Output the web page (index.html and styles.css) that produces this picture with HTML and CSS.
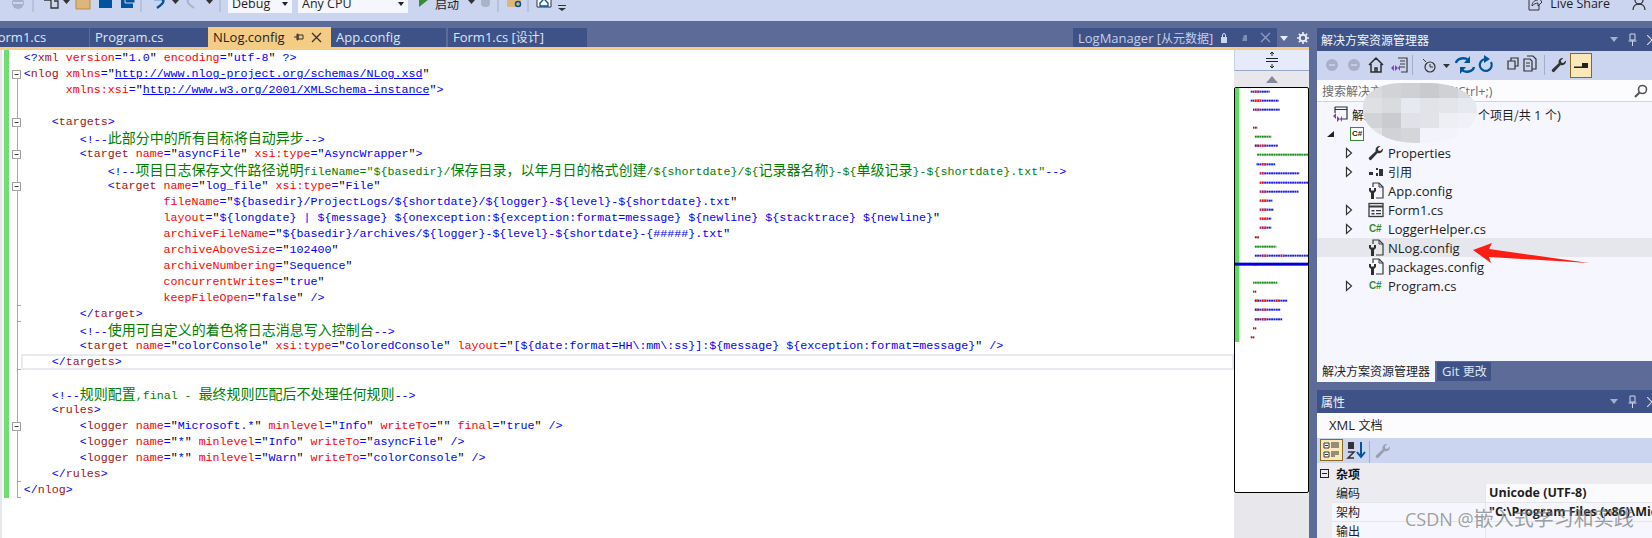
FILE: index.html
```html
<!DOCTYPE html>
<html lang="zh-CN">
<head>
<meta charset="utf-8">
<title>NLog.config</title>
<link rel="stylesheet" href="styles.css">
</head>
<body>
<svg class="defs" width="0" height="0" aria-hidden="true">
  <symbol id="wrench" viewBox="0 0 16 16"><path d="M15 3.500a4.200 4.200 0 0 1-5.400 4.600L3.600 14.600a1.600 1.600 0 0 1-2.300-2.300l6.400-6A4.200 4.200 0 0 1 12.400 1L9.800 3.600l.5 2 2 .5z"/></symbol>
  <symbol id="cfg" viewBox="0 0 16 18"><path d="M5 5V1h6l4 4v11H8" fill="none" stroke="#3a3a3a" stroke-width="1.200"/><path d="M11 1v4h4" fill="none" stroke="#3a3a3a"/><path d="M1 6v3l2 2v6h3v-6l2-2V6L6 6v2.500H3V6z" fill="#2f2f2f"/></symbol>
  <symbol id="form" viewBox="0 0 16 16"><rect x="1" y="1.500" width="14" height="13" fill="none" stroke="#3a3a3a" stroke-width="1.300"/><path d="M1 4.500h14" stroke="#3a3a3a" stroke-width="2"/><path d="M3.500 8h3v1.500h-3zM3.500 11h3v1.500h-3zM8 8h5v1.300H8zM8 11h5v1.300H8z" fill="#3a3a3a"/></symbol>
  <symbol id="exp" viewBox="0 0 8 12"><path d="M1.500 1.500 6.500 6l-5 4.500z" fill="#fff" stroke="#333" stroke-width="1.200"/></symbol>
</svg>

<div class="app">
  <header class="toolbar">
    <div class="tb-row">
      <svg class="tb-a" width="222" height="20" viewBox="0 0 222 20">
        <circle cx="18" cy="7" r="6" fill="#a9afc6"/><path d="M13 7h10" stroke="#ccd5f0" stroke-width="2"/>
        <path d="M33 0v16M141 0v16M220 0v16" stroke="#a4aec8"/>
        <path d="M44 4h7v8h7V5h-4" fill="none" stroke="#333" stroke-width="1.300"/>
        <path d="M63 4h7l-3.500 4z M172 4h7l-3.500 4z M206 4h7l-3.500 4z" fill="#333"/>
        <path d="M76 3h14v10H76z" fill="#dcb67a" stroke="#c08b37"/>
        <path d="M99 3h13v9H99z" fill="#00539c"/>
        <path d="M121 4h12v8h-12z" fill="#00539c"/><path d="M125 2h10v5h-10z" fill="#00539c" stroke="#ccd5f0"/>
        <path d="M154 3h8c3 2 1 5-5 9" fill="none" stroke="#00539c" stroke-width="2.400"/>
        <path d="M196 3h-7c-3 2-1 5 5 9" fill="none" stroke="#aab2c8" stroke-width="2"/>
      </svg>
      <div class="combo combo-debug"><span>Debug</span><i class="tri"></i></div>
      <div class="combo combo-cpu"><span>Any CPU</span><i class="tri"></i></div>
      <svg class="play" width="14" height="20" viewBox="0 0 14 20"><path d="M2 0v11l9-7z" fill="#388a34"/></svg>
      <span class="start z12">启动</span>
      <svg class="tb-b" width="116" height="20" viewBox="0 0 116 20">
        <path d="M2 4h7l-3.500 4z" fill="#333"/>
        <rect x="15" y="2" width="9" height="9" rx="4" fill="#aab2c8"/>
        <path d="M32 0v16M62 0v16" stroke="#a4aec8"/>
        <path d="M41 3h14v8H41z" fill="#dcb67a"/><circle cx="52" cy="8" r="2.500" fill="none" stroke="#00539c" stroke-width="1.500"/>
        <path d="M71 2h14v9H71z" fill="#fff" stroke="#333"/><path d="M74 7l4-4 4 4v3h-8z" fill="none" stroke="#00539c" stroke-width="1.300"/>
        <path d="M92 9.500h8" stroke="#333"/><path d="M92 12h8l-4 3z" fill="#333"/>
      </svg>
      <div class="live">
        <svg width="14" height="16" viewBox="0 0 14 16"><path d="M1 2v12h10V9M4 10c0-4 3-6 6-6V1l4 5-4 4V7C8 7 6 8 4 10z" fill="none" stroke="#333"/></svg>
        <span>Live Share</span>
        <svg class="user" width="14" height="16" viewBox="0 0 14 16"><circle cx="7" cy="4" r="4" fill="none" stroke="#333" stroke-width="1.300"/><path d="M1 14c0-4 3-6 6-6s6 2 6 6" fill="none" stroke="#333" stroke-width="1.300"/></svg>
      </div>
    </div>
  </header>

  <main class="main">
    <section class="doc">
      <nav class="tabbar">
        <div class="tab tab-form"><span class="cut">Form1.cs</span></div>
        <div class="tab tab-prog">Program.cs</div>
        <div class="tab tab-active"><span>NLog.config</span>
          <svg class="pin-s" width="10" height="10" viewBox="0 0 10 10"><path d="M0 5h3M3 2h1v6H3zM4 3h5v4H4z" fill="none" stroke="#333"/></svg>
          <svg class="x-s" width="11" height="11" viewBox="0 0 11 11"><path d="M1 1l9 9M10 1l-9 9" stroke="#333" stroke-width="1.300"/></svg>
        </div>
        <div class="tab tab-app">App.config</div>
        <div class="tab tab-design">Form1.cs [<span class="z12">设计</span>]</div>
        <div class="tab tab-log"><span>LogManager [<span class="z12">从元数据</span>]</span>
          <svg width="8" height="10" viewBox="0 0 8 10" class="lock"><rect x="1" y="4" width="6" height="6" fill="#cdd6ef"/><path d="M2.500 4V2a1.500 1.500 0 0 1 3 0v2" fill="none" stroke="#cdd6ef"/></svg>
          <svg width="10" height="10" viewBox="0 0 10 10" class="pin-g"><path d="M1 9h8M2 8l2-6h3v6z" fill="#7e8db5"/></svg>
          <svg width="11" height="11" viewBox="0 0 11 11" class="x-g"><path d="M1 1l9 9M10 1l-9 9" stroke="#8f9dc2" stroke-width="1.300"/></svg>
        </div>
        <svg class="more" width="8" height="5" viewBox="0 0 8 5"><path d="M0 0h8L4 5z" fill="#e8ecf8"/></svg>
        <svg class="gear" width="12" height="12" viewBox="0 0 12 12"><circle cx="6" cy="6" r="3.300" fill="none" stroke="#e8ecf8" stroke-width="2"/><path d="M6 0v2.500M6 9.500V12M0 6h2.500M9.500 6H12M1.800 1.800l1.700 1.700M8.500 8.500l1.700 1.700M10.200 1.800 8.500 3.500M3.500 8.500l-1.700 1.700" stroke="#e8ecf8" stroke-width="1.600"/></svg>
      </nav>

      <div class="editor">
        <div class="gutter">
          <svg width="21" height="488" viewBox="0 0 21 488">
            <rect x="0" y="0" width="2" height="488" fill="#e8e8ec"/>
            <rect x="4" y="0" width="5" height="448" fill="#6fe06f"/>
            <path d="M17.500 24v424M17.500 255.500h4M17.500 271.500h4M17.500 319.500h4M17.500 431.500h4M17.500 447.500h4" stroke="#a8a8a8" fill="none"/>
            <g fill="#fff" stroke="#a0a0a0">
              <rect x="12.500" y="20.500" width="8" height="8"/>
              <rect x="12.500" y="68.500" width="8" height="8"/>
              <rect x="12.500" y="100.500" width="8" height="8"/>
              <rect x="12.500" y="132.500" width="8" height="8"/>
              <rect x="12.500" y="372.500" width="8" height="8"/>
            </g>
            <path d="M14.500 24.500h4M14.500 72.500h4M14.500 104.500h4M14.500 136.500h4M14.500 376.500h4" stroke="#444"/>
          </svg>
        </div>
        <div class="code">
<div class="l">&lt;?<span class="t">xml</span> <span class="a">version</span>=<span class="q">"</span>1.0<span class="q">"</span> <span class="a">encoding</span>=<span class="q">"</span>utf-8<span class="q">"</span> ?&gt;</div>
<div class="l">&lt;<span class="t">nlog</span> <span class="a">xmlns</span>=<span class="q">"</span><span class="u">http://www.nlog-project.org/schemas/NLog.xsd</span><span class="q">"</span></div>
<div class="l">      <span class="a">xmlns:xsi</span>=<span class="q">"</span><span class="u">http://www.w3.org/2001/XMLSchema-instance</span><span class="q">"</span>&gt;</div>
<div class="l"></div>
<div class="l">    &lt;<span class="t">targets</span>&gt;</div>
<div class="l">        &lt;!--<span class="c"><span class="z">此部分中的所有目标将自动异步</span></span>--&gt;</div>
<div class="l">        &lt;<span class="t">target</span> <span class="a">name</span>=<span class="q">"</span>asyncFile<span class="q">"</span> <span class="a">xsi:type</span>=<span class="q">"</span>AsyncWrapper<span class="q">"</span>&gt;</div>
<div class="l">            &lt;!--<span class="c"><span class="z">项目日志保存文件路径说明</span>fileName="${basedir}/<span class="z">保存目录&#xFF0C;以年月日的格式创建</span>/${shortdate}/${<span class="z">记录器名称</span>}-${<span class="z">单级记录</span>}-${shortdate}.txt"</span>--&gt;</div>
<div class="l">            &lt;<span class="t">target</span> <span class="a">name</span>=<span class="q">"</span>log_file<span class="q">"</span> <span class="a">xsi:type</span>=<span class="q">"</span>File<span class="q">"</span></div>
<div class="l">                    <span class="a">fileName</span>=<span class="q">"</span>${basedir}/ProjectLogs/${shortdate}/${logger}-${level}-${shortdate}.txt<span class="q">"</span></div>
<div class="l">                    <span class="a">layout</span>=<span class="q">"</span>${longdate} | ${message} ${onexception:${exception:format=message} ${newline} ${stacktrace} ${newline}<span class="q">"</span></div>
<div class="l">                    <span class="a">archiveFileName</span>=<span class="q">"</span>${basedir}/archives/${logger}-${level}-${shortdate}-{#####}.txt<span class="q">"</span></div>
<div class="l">                    <span class="a">archiveAboveSize</span>=<span class="q">"</span>102400<span class="q">"</span></div>
<div class="l">                    <span class="a">archiveNumbering</span>=<span class="q">"</span>Sequence<span class="q">"</span></div>
<div class="l">                    <span class="a">concurrentWrites</span>=<span class="q">"</span>true<span class="q">"</span></div>
<div class="l">                    <span class="a">keepFileOpen</span>=<span class="q">"</span>false<span class="q">"</span> /&gt;</div>
<div class="l">        &lt;/<span class="t">target</span>&gt;</div>
<div class="l">        &lt;!--<span class="c"><span class="z">使用可自定义的着色将日志消息写入控制台</span></span>--&gt;</div>
<div class="l">        &lt;<span class="t">target</span> <span class="a">name</span>=<span class="q">"</span>colorConsole<span class="q">"</span> <span class="a">xsi:type</span>=<span class="q">"</span>ColoredConsole<span class="q">"</span> <span class="a">layout</span>=<span class="q">"</span>[${date:format=HH\:mm\:ss}]:${message} ${exception:format=message}<span class="q">"</span> /&gt;</div>
<div class="l caret">    &lt;/<span class="t">targets</span>&gt;</div>
<div class="l"></div>
<div class="l">    &lt;!--<span class="c"><span class="z">规则配置</span>,final - <span class="z">最终规则匹配后不处理任何规则</span></span>--&gt;</div>
<div class="l">    &lt;<span class="t">rules</span>&gt;</div>
<div class="l">        &lt;<span class="t">logger</span> <span class="a">name</span>=<span class="q">"</span>Microsoft.*<span class="q">"</span> <span class="a">minlevel</span>=<span class="q">"</span>Info<span class="q">"</span> <span class="a">writeTo</span>=<span class="q">""</span> <span class="a">final</span>=<span class="q">"</span>true<span class="q">"</span> /&gt;</div>
<div class="l">        &lt;<span class="t">logger</span> <span class="a">name</span>=<span class="q">"</span>*<span class="q">"</span> <span class="a">minlevel</span>=<span class="q">"</span>Info<span class="q">"</span> <span class="a">writeTo</span>=<span class="q">"</span>asyncFile<span class="q">"</span> /&gt;</div>
<div class="l">        &lt;<span class="t">logger</span> <span class="a">name</span>=<span class="q">"</span>*<span class="q">"</span> <span class="a">minlevel</span>=<span class="q">"</span>Warn<span class="q">"</span> <span class="a">writeTo</span>=<span class="q">"</span>colorConsole<span class="q">"</span> /&gt;</div>
<div class="l">    &lt;/<span class="t">rules</span>&gt;</div>
<div class="l">&lt;/<span class="t">nlog</span>&gt;</div>
        </div>
        <aside class="overview">
          <div class="split">
            <svg width="14" height="18" viewBox="0 0 14 18"><path d="M1 7.500h12M1 10.500h12" stroke="#222"/><path d="M7 1v4M7 13v4M5 3l2-2 2 2M5 15l2 2 2-2" fill="none" stroke="#222"/></svg>
          </div>
          <div class="up"><svg width="12" height="7" viewBox="0 0 12 7"><path d="M6 0l6 7H0z" fill="#868999"/></svg></div>
          <div class="map">
            <svg width="73" height="404" viewBox="31 144 219 1212">
              <defs><pattern id="dash" width="7" height="8" patternUnits="userSpaceOnUse"><rect x="4.500" width="2.500" height="8" fill="#fff" fill-opacity=".55"/></pattern></defs>
              <rect x="31" y="144" width="13" height="762" fill="#5fdc5f"/>
              <g fill="#1515e0">
                <rect x="78" y="152" width="57" height="6"/><rect x="78" y="179" width="84" height="6"/><rect x="85" y="206" width="80" height="6"/>
                <rect x="90" y="314" width="70" height="6"/><rect x="95" y="370" width="57" height="6"/><rect x="105" y="397" width="119" height="6"/>
                <rect x="105" y="425" width="145" height="6"/><rect x="105" y="452" width="117" height="6"/><rect x="105" y="479" width="38" height="6"/>
                <rect x="105" y="506" width="42" height="6"/><rect x="105" y="533" width="35" height="6"/><rect x="105" y="560" width="35" height="6"/>
                <rect x="90" y="644" width="160" height="6"/><rect x="90" y="779" width="98" height="6"/><rect x="90" y="806" width="77" height="6"/><rect x="90" y="835" width="83" height="6"/>
              </g>
              <g fill="#f01010">
                <rect x="88" y="152" width="14" height="6"/><rect x="88" y="179" width="22" height="6"/><rect x="90" y="206" width="16" height="6"/>
                <rect x="105" y="314" width="18" height="6"/><rect x="110" y="370" width="14" height="6"/><rect x="105" y="397" width="14" height="6"/>
                <rect x="105" y="425" width="10" height="6"/><rect x="105" y="452" width="20" height="6"/><rect x="105" y="479" width="24" height="6"/>
                <rect x="105" y="506" width="24" height="6"/><rect x="105" y="533" width="26" height="6"/><rect x="105" y="560" width="22" height="6"/>
                <rect x="112" y="644" width="18" height="6"/><rect x="165" y="644" width="14" height="6"/>
                <rect x="112" y="779" width="14" height="6"/><rect x="150" y="779" width="14" height="6"/><rect x="112" y="806" width="14" height="6"/><rect x="112" y="835" width="14" height="6"/>
              </g>
              <g fill="#9c1414">
                <rect x="85" y="260" width="13" height="6"/><rect x="90" y="314" width="12" height="6"/><rect x="90" y="589" width="13" height="6"/>
                <rect x="85" y="670" width="13" height="6"/><rect x="85" y="752" width="10" height="6"/><rect x="90" y="779" width="12" height="6"/>
                <rect x="90" y="806" width="12" height="6"/><rect x="90" y="835" width="12" height="6"/><rect x="85" y="862" width="10" height="6"/><rect x="78" y="889" width="12" height="6"/>
              </g>
              <g fill="#118a11">
                <rect x="90" y="287" width="50" height="6"/><rect x="97" y="341" width="153" height="6"/><rect x="90" y="617" width="65" height="6"/><rect x="85" y="725" width="73" height="6"/>
              </g>
              <rect x="44" y="144" width="206" height="762" fill="url(#dash)"/>
              <rect x="31" y="668" width="219" height="9" fill="#0000d8"/>
            </svg>
          </div>
        </aside>
      </div>
    </section>

    <section class="side">
      <div class="ptitle">
        <span class="z12">解决方案资源管理器</span>
        <div class="ptitle-btns">
          <svg width="8" height="5" viewBox="0 0 8 5"><path d="M0 0h8L4 5z" fill="#a3b0d4"/></svg>
          <svg width="9" height="13" viewBox="0 0 9 13"><path d="M2 1h5v6H2zM0.500 8h8M4.500 8v5" fill="none" stroke="#cfd8ef"/></svg>
          <svg width="10" height="10" viewBox="0 0 10 10"><path d="M0 0l10 10M10 0 0 10" stroke="#cfd8ef" stroke-width="1.200"/></svg>
        </div>
      </div>
      <div class="ptools">
        <svg width="280" height="28" viewBox="0 0 280 28">
          <g fill="#a9afc6"><circle cx="15" cy="14" r="6"/><circle cx="37" cy="14" r="6"/></g>
          <path d="M12 14h6M34 14h6" stroke="#ccd5f0" stroke-width="1.500"/>
          <path d="M52 14l7-7 7 7M54 13v8h10v-8M58 21v-4h2v4" fill="none" stroke="#2c2c2c" stroke-width="1.500"/>
          <path d="M74 17l3-3v6zM78 14l3 3 2-3v6l-2-3-3 3z" fill="#7e3fc0"/>
          <path d="M81 7h9v14h-6" fill="none" stroke="#3a3a3a" stroke-width="1.200"/>
          <path d="M83 10h5M83 13h5M83 16h5" stroke="#3a3a3a"/>
          <path d="M95.500 4v20M227.500 4v20" stroke="#a4aec8"/>
          <circle cx="113" cy="16" r="5" fill="none" stroke="#333" stroke-width="1.200"/><path d="M113 13v3h3M106 8l3 3" fill="none" stroke="#333"/>
          <path d="M126 13h7l-3.500 4z" fill="#333"/>
          <path d="M139 12c1-5 9-6 12-3M157 16c-1 5-9 6-12 3" fill="none" stroke="#00539c" stroke-width="2.400"/>
          <path d="M153 5v7h-6zM143 23v-7h6z" fill="#00539c"/>
          <path d="M174 11a6 6 0 1 1-6-3" fill="none" stroke="#00539c" stroke-width="2.200"/><path d="M167 4l6 4-6 4z" fill="#00539c"/>
          <path d="M191 10h7v8h-7zM194 10V7h7v8h-3" fill="none" stroke="#333" stroke-width="1.200"/>
          <path d="M207 8h6l2 2v10h-8z M210 5h6l3 3v10h-4" fill="none" stroke="#333" stroke-width="1.200"/><path d="M209 12h4M209 15h4" stroke="#333"/>
          <use href="#wrench" x="234" y="6" width="16" height="16" fill="#333"/>
          <rect x="253.500" y="2.500" width="21" height="24" fill="#fbe8ba" stroke="#8a6a1e"/>
          <path d="M257 15.500h14v1.500h-14zM265 12h6v4h-6z" fill="#222"/>
        </svg>
      </div>
      <div class="search">
        <span class="search-t"><span class="z12">搜索解决方案资源管理器</span>(Ctrl+;)</span>
        <svg width="14" height="14" viewBox="0 0 14 14"><circle cx="8.500" cy="5.500" r="4" fill="none" stroke="#555" stroke-width="1.600"/><path d="M5.500 8.500 1 13" stroke="#555" stroke-width="2.200"/></svg>
      </div>
      <div class="tree">
        <div class="row r-sol"><svg class="ic" width="16" height="17" viewBox="0 0 16 17"><path d="M3 1h12v12H10M3 1v6M3 3.500h12" fill="none" stroke="#333" stroke-width="1.200"/><path d="M1 10l3 3v-6zM5 10l3 3 2-3v6l-2-3-3 3z" fill="#7e3fc0"/></svg><span class="z12">解决方案</span><span class="sol-rest"><span class="z12">个项目/共</span> 1 <span class="z12">个</span>)</span></div>
        <div class="row r-proj"><svg class="ex" width="23" height="8" viewBox="0 0 23 8"><path d="M7 1v6H0z" fill="#222"/></svg><span class="cs-box">C#</span></div>
        <div class="row"><svg class="ex" width="23" height="12" viewBox="0 0 23 12"><use href="#exp" width="8" height="12"/></svg><svg class="ic" width="16" height="16"><use href="#wrench" fill="#333"/></svg><span>Properties</span></div>
        <div class="row"><svg class="ex" width="23" height="12" viewBox="0 0 23 12"><use href="#exp" width="8" height="12"/></svg><svg class="ic" width="16" height="12" viewBox="0 0 16 12"><path d="M1 6h4v3H1zM8 7h2v3H8zM11 3h4v7h-4zM8 2h2v2H8z" fill="#333"/></svg><span class="z12">引用</span></div>
        <div class="row r-leaf"><svg class="ic" width="16" height="18"><use href="#cfg"/></svg><span>App.config</span></div>
        <div class="row"><svg class="ex" width="23" height="12" viewBox="0 0 23 12"><use href="#exp" width="8" height="12"/></svg><svg class="ic" width="16" height="16"><use href="#form"/></svg><span>Form1.cs</span></div>
        <div class="row"><svg class="ex" width="23" height="12" viewBox="0 0 23 12"><use href="#exp" width="8" height="12"/></svg><span class="cs">C#</span><span>LoggerHelper.cs</span></div>
        <div class="row r-leaf r-hi"><svg class="ic" width="16" height="18"><use href="#cfg"/></svg><span>NLog.config</span></div>
        <div class="row r-leaf"><svg class="ic" width="16" height="18"><use href="#cfg"/></svg><span>packages.config</span></div>
        <div class="row"><svg class="ex" width="23" height="12" viewBox="0 0 23 12"><use href="#exp" width="8" height="12"/></svg><span class="cs">C#</span><span>Program.cs</span></div>
      </div>
      <div class="btabs">
        <div class="btab btab-on z12">解决方案资源管理器</div>
        <div class="btab btab-off">Git <span class="z12">更改</span></div>
      </div>
      <div class="ptitle ptitle-prop">
        <span class="z12">属性</span>
        <div class="ptitle-btns">
          <svg width="8" height="5" viewBox="0 0 8 5"><path d="M0 0h8L4 5z" fill="#a3b0d4"/></svg>
          <svg width="9" height="13" viewBox="0 0 9 13"><path d="M2 1h5v6H2zM0.500 8h8M4.500 8v5" fill="none" stroke="#cfd8ef"/></svg>
          <svg width="10" height="10" viewBox="0 0 10 10"><path d="M0 0l10 10M10 0 0 10" stroke="#cfd8ef" stroke-width="1.200"/></svg>
        </div>
      </div>
      <div class="objname">XML <span class="z12">文档</span></div>
      <div class="ptools2">
        <svg width="90" height="25" viewBox="0 0 90 25">
          <rect x="3.500" y="1.500" width="22" height="21" fill="#fbe8ba" stroke="#8a6a1e"/>
          <path d="M7 5h5v5H7zM7 14h5v5H7z" fill="#fff" stroke="#333"/>
          <path d="M8 7.500h3M8 16.500h3M14 5h8M14 7h8M14 9h8M14 14h8M14 16h8M14 18h4" stroke="#333"/>
          <path d="M31 4h6v7h-6z" fill="#333"/><path d="M31 14h6l-6 6h6" fill="none" stroke="#333" stroke-width="1.500"/>
          <path d="M44 4v14M40 14l4 5 4-5" fill="none" stroke="#00539c" stroke-width="2"/>
          <path d="M52.500 3v22" stroke="#a4aec8"/>
          <use href="#wrench" x="58" y="5" width="16" height="16" fill="#9a9fb0"/>
        </svg>
      </div>
      <div class="pgrid">
        <div class="pg-group"><svg width="9" height="9" viewBox="0 0 9 9"><rect x=".5" y=".5" width="8" height="8" fill="none" stroke="#222"/><path d="M2 4.500h5" stroke="#222"/></svg><b class="z12">杂项</b></div>
        <div class="pg-row pg-sel"><span class="pg-k z12">编码</span><span class="pg-v">Unicode (UTF-8)</span></div>
        <div class="pg-row"><span class="pg-k z12">架构</span><span class="pg-v">"C:\Program Files (x86)\Microsoft Visual Studio</span></div>
        <div class="pg-row"><span class="pg-k z12">输出</span><span class="pg-v"></span></div>
      </div>
      <div class="blob">
        <i class="b1"></i><i class="b2"></i><i class="b3"></i><i class="b4"></i><i class="b5"></i><i class="b6"></i>
        <i class="b7"></i><i class="b8"></i><i class="b9"></i><i class="b10"></i><i class="b11"></i><i class="b12"></i>
        <i class="b13"></i><i class="b14"></i><i class="b15"></i><i class="b16"></i><i class="b17"></i><i class="b18"></i>
        <i class="b19"></i><i class="b20"></i><i class="b21"></i><i class="b22"></i><i class="b23"></i><i class="b24"></i>
      </div>
    </section>
  </main>

  <svg class="arrow" width="120" height="24" viewBox="0 0 120 24"><path d="M1 9 20 2l-3 6 100 14-100-6 2 6z" fill="#fa1e14"/></svg>
  <div class="mark">CSDN @<span class="mark-z">嵌入式学习和实践</span></div>
</div>
</body>
</html>
```
FILE: styles.css
```css
* { box-sizing: border-box; }
html, body { margin: 0; padding: 0; }
body {
  width: 1652px; height: 538px; overflow: hidden;
  font-family: "Open Sans", "Noto Sans CJK SC", sans-serif;
  font-size: 13px; color: #1e1e1e; background: #5d6b99;
}
.defs { position: absolute; }
.z12 { font-family: "Noto Sans CJK SC", sans-serif; font-size: 12px; }
.app { position: relative; width: 1652px; height: 538px; display: flex; flex-direction: column; }

/* top toolbar (cropped) */
.toolbar { height: 21px; background: #ccd5f0; overflow: hidden; flex: none; }
.tb-row { display: flex; align-items: flex-start; height: 20px; margin-top: -4px; }
.tb-a { flex: none; }
.combo { height: 17px; background: #f5f6fe; display: flex; align-items: center; justify-content: space-between; padding: 0 4px 2px; font-size: 12.500px; line-height: 14px; flex: none; }
.combo-debug { width: 64px; margin-left: 6px; }
.combo-cpu { width: 110px; margin-left: 6px; }
.tri { width: 0; height: 0; border: 3.500px solid transparent; border-top: 4px solid #222; border-bottom: 0; }
.play { margin-left: 9px; flex: none; }
.start { margin-left: 4px; line-height: 15px; flex: none; width: 31px; }
.tb-b { flex: none; margin-left: 0; }
.live { margin-left: auto; display: flex; align-items: flex-start; padding-right: 6px; }
.live span { margin-left: 8px; line-height: 16px; font-size: 12.500px; }
.live .user { margin-left: 22px; }

.main { flex: 1; display: flex; min-height: 0; }
.doc { width: 1317px; flex: none; }
.tabbar { width: 1309px; height: 29px; display: flex; align-items: flex-end; border-bottom: 3px solid #f5cc84; }
.tab { height: 19px; background: #3f5287; color: #dbe5f8; line-height: 18px; padding-left: 5px; overflow: hidden; white-space: nowrap; flex: none; }
.tab-form { width: 89px; padding-left: 0; margin-right: 1px; }
.cut { display: inline-block; margin-left: -9px; }
.tab-prog { width: 118px; }
.tab-active { width: 123px; height: 20px; background: #f5cc84; color: #222; display: flex; align-items: center; }
.pin-s { margin-left: 9px; flex: none; }
.x-s { margin-left: 7px; flex: none; }
.tab-app { width: 115px; margin-right: 2px; }
.tab-design { width: 139px; }
.tab-log { width: 204px; margin-left: auto; color: #c3cfea; display: flex; align-items: center; }
.lock { margin-left: 7px; }
.pin-g { margin-left: 12px; }
.x-g { margin-left: 10px; }
.more { margin: 0 0 6px 3px; flex: none; }
.gear { margin: 0 0 3px 9px; flex: none; }

.editor { width: 1309px; height: 488px; display: flex; background: #fff; }
.gutter { width: 21px; flex: none; }
.gutter svg { display: block; }
.code { width: 1213px; flex: none; overflow: hidden; font-family: "Liberation Mono", monospace; font-size: 11.670px; color: #0000ff; }
.l { height: 16px; line-height: 16px; white-space: pre; padding-left: 2.700px; overflow: hidden; }
.caret { box-shadow: inset 0 0 0 2px #e9e9f2; }
.t { color: #a31515; }
.a { color: #ff0000; }
.q { color: #000; }
.c { color: #008000; }
.u { text-decoration: underline; }
.z { font-family: "Noto Sans CJK SC", sans-serif; font-size: 14px; line-height: 14px; }

.overview { width: 75px; flex: none; background: #e8e8ec; display: flex; flex-direction: column; }
.split { height: 21px; background: #e6ebfb; border-bottom: 1px solid #98a8cc; border-left: 1px solid #c6d0e8; display: flex; align-items: center; justify-content: center; }
.up { height: 16px; display: flex; align-items: center; justify-content: center; }
.map { height: 406px; border: 1px solid #000; border-radius: 2px; background: #fff; overflow: hidden; }
.map svg { display: block; }

/* right column */
.side { position: relative; width: 335px; flex: none; padding-top: 7px; }
.ptitle { height: 23px; background: #3f5287; color: #f2f5fc; display: flex; align-items: center; padding-left: 4px; }
.ptitle-btns { margin-left: auto; display: flex; align-items: center; gap: 10px; padding-right: 0; margin-right: -5px; }
.ptools { height: 29px; background: #ccd5f0; }
.ptools svg { display: block; }
.search { height: 22px; background: #fcfcfe; border-bottom: 1px solid #ccd5f0; display: flex; align-items: center; justify-content: space-between; padding: 0 4px 0 5px; }
.search-t { color: #6d6d6d; font-size: 12.500px; }
.tree { height: 259px; background: #f5f6fe; padding-top: 3px; }
.row { height: 19px; display: flex; align-items: center; padding-left: 28px; white-space: nowrap; }
.ex { flex: none; }
.ic { flex: none; margin-right: 4px; }
.r-leaf { padding-left: 51px; }
.r-hi { background: #e6e7ed; }
.r-sol { padding-left: 15px; }
.sol-rest { margin-left: 78px; }
.r-proj { padding-left: 10px; }
.cs-box { width: 14px; height: 14px; border: 1px solid #388a34; background: #fff; font: bold 8px/12px "Liberation Sans", sans-serif; text-align: center; color: #222; }
.cs { width: 20px; flex: none; color: #388a34; font: bold 10px/12px "Liberation Sans", sans-serif; letter-spacing: -.3px; padding-left: 1px; }
.btabs { height: 21px; display: flex; }
.btab { line-height: 20px; }
.btab-on { width: 118px; background: #f5f6fe; padding-left: 5px; }
.btab-off { margin: 1px 0 1px 2px; width: 54px; height: 19px; line-height: 18px; background: #3f5287; color: #dbe5f8; padding-left: 5px; }
.ptitle-prop { margin-top: 8px; }
.objname { height: 25px; background: #fcfcfe; padding-left: 12px; line-height: 24px; }
.ptools2 { height: 25px; background: #ccd5f0; }
.ptools2 svg { display: block; }
.pgrid { background: #ececf0; }
.pg-group { height: 21px; display: flex; align-items: center; padding-left: 3px; gap: 7px; }
.pg-group b { color: #111; }
.pg-row { height: 19px; display: flex; margin-left: 15px; background: #f5f6fe; border-bottom: 1px solid #e6e6ea; }
.pg-k { width: 153px; flex: none; line-height: 18px; padding-left: 4px; }
.pg-v { flex: 1; padding-left: 3px; font-weight: 700; font-size: 12.500px; line-height: 18px; white-space: nowrap; overflow: hidden; border-left: 1px solid #e6e6ea; }
.pg-sel { background: #ececf0; }
.pg-sel .pg-v { background: #fbfbfe; }

.blob { position: absolute; left: 46px; top: 62px; width: 114px; height: 60px; border-radius: 36% 46% 50% 50% / 42% 50% 60% 60%; overflow: hidden; display: grid; grid-template-columns: repeat(6, 19px); grid-auto-rows: 15px; }
.b1 { background: #d9dade; } .b2 { background: #d2d3d7; } .b3 { background: #cfd0d3; } .b4 { background: #c9cacd; } .b5 { background: #d0d1d4; } .b6 { background: #dadbde; }
.b7 { background: #dfe0e4; } .b8 { background: #dadbdf; } .b9 { background: #e7e9f0; } .b10 { background: #e1e3e9; } .b11 { background: #e3e5eb; } .b12 { background: #e7e9f0; }
.b13 { background: #d1d3d7; } .b14 { background: #c9cbcf; } .b15 { background: #e0e2e7; } .b16 { background: #e1e3e8; } .b17 { background: #edeff5; } .b18 { background: #eff1f7; }
.b19 { background: #e0e2e6; } .b20 { background: #d0d2d6; } .b21 { background: #d4d6da; } .b22 { background: #f3f4fb; } .b23 { background: #f3f4fb; } .b24 { background: #f5f6fe; }

.arrow { position: absolute; left: 1472px; top: 241px; }
.mark { position: absolute; left: 1405px; top: 505px; font-family: "Open Sans", sans-serif; font-size: 18px; line-height: 26px; color: rgba(120, 120, 120, .7); white-space: nowrap; }
.mark-z { font-family: "Noto Sans CJK SC", sans-serif; font-size: 20px; }
```
